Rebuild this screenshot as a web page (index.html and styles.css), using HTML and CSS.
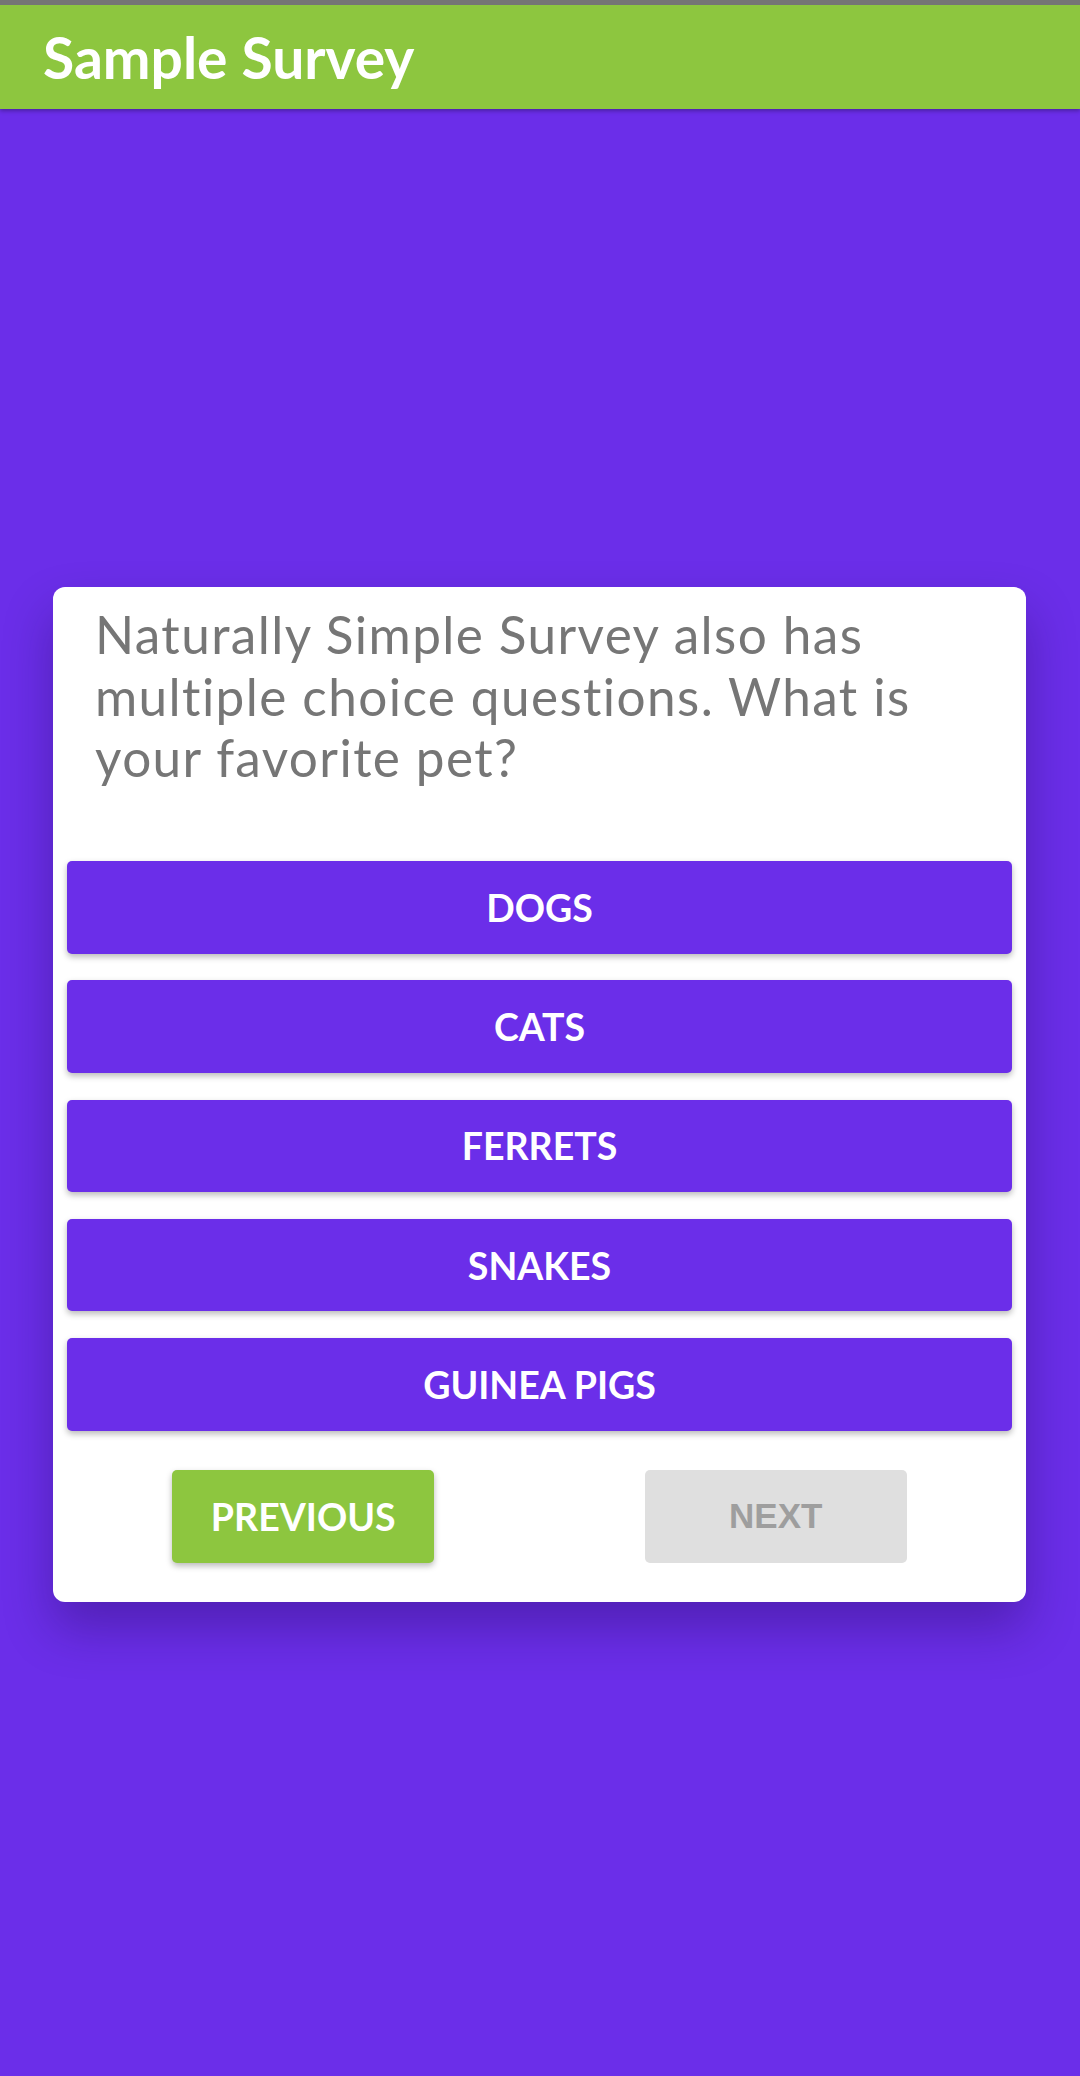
FILE: index.html
```html
<!DOCTYPE html>
<html lang="en">
<head>
<meta charset="utf-8">
<title>Sample Survey</title>
<link rel="stylesheet" href="styles.css">
</head>
<body>
<header class="appbar">
  <h1 class="appbar-title">Sample Survey</h1>
</header>
<main class="content">
  <section class="card">
    <p class="question">Naturally Simple Survey also has multiple choice questions. What is your favorite pet?</p>
    <div class="options">
      <button class="option">DOGS</button>
      <button class="option">CATS</button>
      <button class="option">FERRETS</button>
      <button class="option">SNAKES</button>
      <button class="option">GUINEA PIGS</button>
    </div>
    <div class="nav">
      <div class="nav-cell"><button class="nav-btn prev">PREVIOUS</button></div>
      <div class="nav-cell"><button class="nav-btn next" disabled>NEXT</button></div>
    </div>
  </section>
</main>
</body>
</html>
```

FILE: styles.css
```css
html, body {
  margin: 0;
  padding: 0;
}
body {
  width: 1080px;
  min-height: 2076px;
  background: #6b2ee9;
  font-family: Lato, "Noto Sans", sans-serif;
  overflow: hidden;
}
.appbar {
  border-top: 5px solid #757575;
  height: 104px;
  background: #8dc63f;
  box-shadow: 0 2px 4px rgba(0, 0, 0, 0.3);
  position: relative;
  z-index: 1;
}
.appbar-title {
  margin: 0;
  padding-left: 43px;
  font-size: 57px;
  font-weight: 700;
  line-height: 104px;
  color: #ffffff;
}
.content {
  padding-top: 478px;
}
.card {
  margin: 0 54px 0 53px;
  background: #ffffff;
  border-radius: 12px;
  padding: 17px 14px 39px 14px;
  box-shadow: 0 26px 50px rgba(20, 0, 60, 0.3);
}
.question {
  margin: 0 0 72.5px 0;
  padding: 0 28px;
  font-size: 51.3px;
  line-height: 61.5px;
  letter-spacing: 1.4px;
  color: #767676;
  font-weight: 400;
}
.options {
  display: flex;
  flex-direction: column;
  gap: 26.8px;
}
.option {
  display: block;
  width: 100%;
  height: 92.5px;
  border: none;
  border-radius: 5px;
  background: #6b2ee9;
  color: #ffffff;
  font-family: Lato, "Noto Sans", sans-serif;
  font-weight: 700;
  font-size: 37.5px;
  box-shadow: 0 3px 6px rgba(0, 0, 0, 0.28);
  padding: 0;
}
.nav {
  display: flex;
  margin-top: 39.3px;
}
.nav-cell {
  flex: 1;
  display: flex;
  justify-content: center;
}
.nav-btn {
  width: 262px;
  height: 92.7px;
  border: none;
  border-radius: 5px;
  padding: 0;
}
.prev {
  background: #8dc63f;
  color: #ffffff;
  font-family: Lato, "Noto Sans", sans-serif;
  font-weight: 700;
  font-size: 37.5px;
  box-shadow: 0 3px 6px rgba(0, 0, 0, 0.28);
}
.next {
  background: #dfdfdf;
  color: #9e9e9e;
  font-family: "Liberation Sans", Arial, sans-serif;
  font-weight: 700;
  font-size: 35px;
}
```
